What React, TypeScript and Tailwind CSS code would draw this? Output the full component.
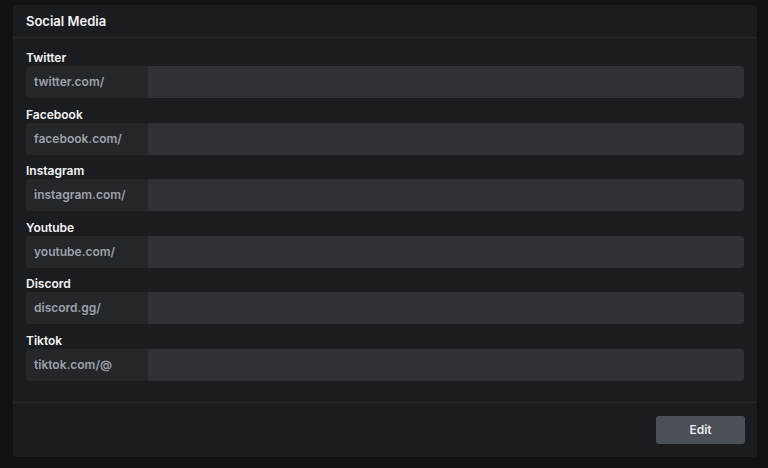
const LINKS = [
  { name: "Twitter", prefix: "twitter.com/" },
  { name: "Facebook", prefix: "facebook.com/" },
  { name: "Instagram", prefix: "instagram.com/" },
  { name: "Youtube", prefix: "youtube.com/" },
  { name: "Discord", prefix: "discord.gg/" },
  { name: "Tiktok", prefix: "tiktok.com/@" },
];

export default function App() {
  return (
    <div
      className="h-[468px] w-[768px] bg-[#111215] pl-[13px] pt-[5px]"
      style={{ fontFamily: "Inter, 'Noto Sans', sans-serif" }}
    >
      <div className="flex h-[452px] w-[744px] flex-col rounded-[3px] bg-[#1b1c20]">
        <div className="flex h-[33px] items-center border-b border-[#27292d] px-[13px] pt-[1px]">
          <h2 className="text-[13px] font-semibold text-[#f2f2f2]">Social Media</h2>
        </div>
        <div className="flex flex-col gap-[8.6px] border-b border-[#27292d] px-[13px] pb-[21px] pt-[12px]">
          {LINKS.map((l) => (
            <div key={l.name}>
              <label className="block h-[16px] text-[12px] font-semibold leading-[16px] text-[#f4f4f4]">
                {l.name}
              </label>
              <div className="flex h-[32px] overflow-hidden rounded-[3px]">
                <span className="flex w-[122px] items-center bg-[#24262a] px-[8px] text-[12px] font-semibold text-[#9da2a8]">
                  {l.prefix}
                </span>
                <input
                  className="flex-1 bg-[#2e3236] px-2 text-[12px] text-white outline-none"
                  type="text"
                />
              </div>
            </div>
          ))}
        </div>
        <div className="flex flex-1 items-center justify-end px-[12px]">
          <button className="h-[28px] w-[89px] rounded-[3px] bg-[#4a5056] text-[12px] font-semibold text-[#ececec]">
            Edit
          </button>
        </div>
      </div>
    </div>
  );
}
